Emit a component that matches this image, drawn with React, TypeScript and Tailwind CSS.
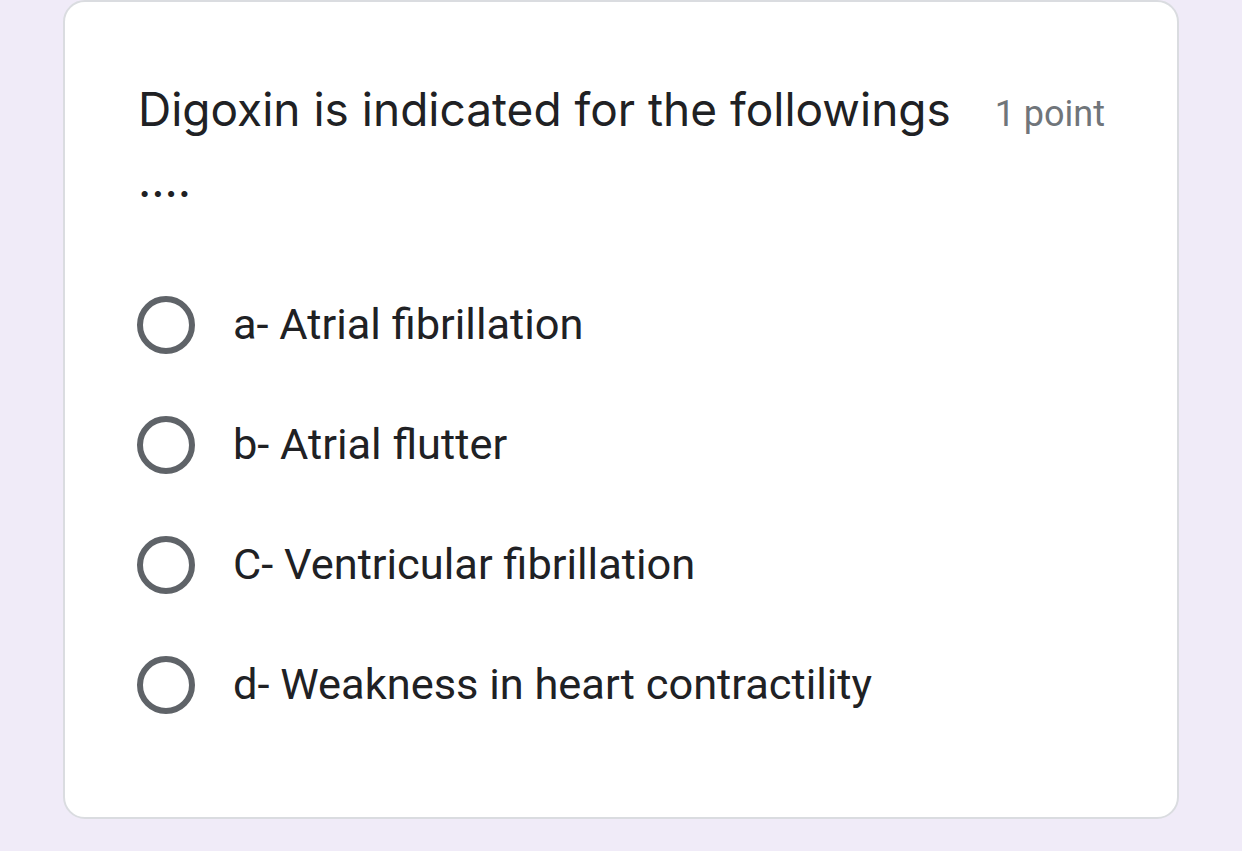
import React from 'react';

const options = [
  'a- Atrial fibrillation',
  'b- Atrial flutter',
  'C- Ventricular fibrillation',
  'd- Weakness in heart contractility',
];

const Radio = () => (
  <div className="w-[58px] h-[58px] rounded-full border-[6px] border-[#5f6368] shrink-0" />
);

export default function App() {
  return (
    <div className="min-h-[851px] w-full bg-[#f0ebf8] pl-[63px] pr-[63px] pt-0">
      <div className="w-[1116px] h-[819px] bg-white border-2 border-[#dadce0] rounded-[22px] pl-[73px] pr-[72px] pt-[73px]">
        <div className="flex items-start justify-between">
          <div className="text-[#202124] text-[46px] leading-[68px] font-['Inter',sans-serif]">
            <div>Digoxin is indicated for the followings</div>
            <div className="mt-[3px]">....</div>
          </div>
          <div className="text-[#70757a] text-[36px] leading-[68px] pt-[5px] font-['Roboto',sans-serif] whitespace-nowrap">
            1 point
          </div>
        </div>
        <div className="mt-[82px] flex flex-col gap-[62px] font-['Roboto',sans-serif]">
          {options.map((o) => (
            <div key={o} className="flex items-center gap-[38px] -ml-[1px]">
              <Radio />
              <span className="text-[#202124] text-[43.4px] leading-[58px]">{o}</span>
            </div>
          ))}
        </div>
      </div>
    </div>
  );
}
